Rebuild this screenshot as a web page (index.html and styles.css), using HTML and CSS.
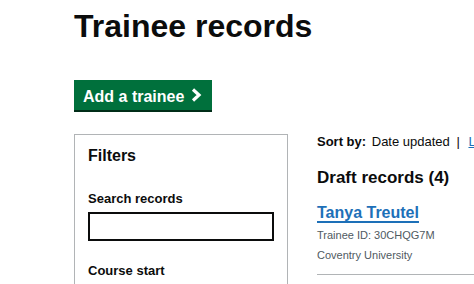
FILE: index.html
```html
<!DOCTYPE html>
<html lang="en">

<head>
  <meta charset="UTF-8">
  <meta name="viewport" content="width=device-width, initial-scale=1.0">
  <title>Trainee records</title>
  <link rel="stylesheet" href="styles.css">
</head>

<body>

  <div class="page">
    <!-- Heading -->
    <h1 class="page-title">Trainee records</h1>

    <a href="#" class="start-button">
      Add a trainee
      <svg class="chevron" width="11" height="14" viewBox="0 0 11 14" aria-hidden="true">
        <polyline points="2,1.5 8,7 2,12.5" fill="none" stroke="#fff" stroke-width="3.2" />
      </svg>
    </a>

    <div class="layout">
      <!-- Filters -->
      <div class="filters">
        <h2>Filters</h2>
        <label for="search">Search records</label>
        <input type="text" id="search" class="search-input">
        <h3>Course start</h3>
      </div>

      <!-- Records -->
      <div class="records">
        <div class="sort-by">
          <strong>Sort by:</strong>
          <span class="sort-current">Date updated</span>
          <span class="sort-sep">|</span>
          <a href="#">Last name</a>
        </div>

        <h2 class="records-title">Draft records (4)</h2>

        <div class="record">
          <a href="#" class="record-name">Tanya Treutel</a>
          <p class="record-meta">Trainee ID: 30CHQG7M</p>
          <p class="record-meta">Coventry University</p>
        </div>
      </div>
    </div>
  </div>

</body>

</html>
```

FILE: styles.css
```css
body {
  font-family: "Liberation Sans", Arial, sans-serif;
  color: #0b0c0c;
  margin: 0;
  padding: 0;
  overflow: hidden;
}

.page {
  width: 700px;
  padding: 8px 0 0 74px;
}

/* Heading */
.page-title {
  font-size: 32px;
  line-height: 36px;
  margin: 0 0 36px;
}

/* Start button */
.start-button {
  display: inline-flex;
  align-items: center;
  gap: 7px;
  box-sizing: border-box;
  height: 30px;
  padding: 3px 10px 0 9px;
  font-size: 16px;
  line-height: 27px;
  font-weight: bold;
  color: #fff;
  background: #00703c;
  box-shadow: 0 2px 0 #002d18;
  text-decoration: none;
}

.chevron {
  margin-top: -3px;
}

/* Layout */
.layout {
  display: grid;
  grid-template-columns: 214px 1fr;
  column-gap: 29px;
  margin-top: 24px;
}

/* Filters */
.filters {
  border: 1px solid #b1b4b6;
  padding: 11px 13px 40px;
}

.filters h2 {
  font-size: 16px;
  line-height: 20px;
  margin: 0 0 25px;
}

.filters label,
.filters h3 {
  display: block;
  font-size: 13px;
  line-height: 16px;
  font-weight: bold;
  margin: 0;
}

.search-input {
  display: block;
  box-sizing: border-box;
  width: 186px;
  height: 29px;
  margin: 5px 0 22px;
  border: 2px solid #0b0c0c;
  font-size: 13px;
}

/* Records */
.sort-by {
  font-size: 13px;
  line-height: 16px;
  white-space: nowrap;
}

.sort-current {
  margin-left: 2px;
}

.sort-sep {
  margin: 0 5px 0 3px;
}

.sort-by a {
  color: #1d70b8;
}

.records-title {
  font-size: 17px;
  line-height: 20px;
  margin: 18px 0 15px;
}

.record {
  border-bottom: 1px solid #b1b4b6;
  padding-bottom: 12px;
}

.record-name {
  display: block;
  font-size: 16px;
  line-height: 20px;
  font-weight: bold;
  color: #1d70b8;
  text-decoration-thickness: 1.5px;
  text-underline-offset: 3px;
}

.record-meta {
  font-size: 11px;
  line-height: 14px;
  color: #505a5f;
  margin: 5px 0 0;
}

.record-meta + .record-meta {
  margin-top: 6px;
}
```
